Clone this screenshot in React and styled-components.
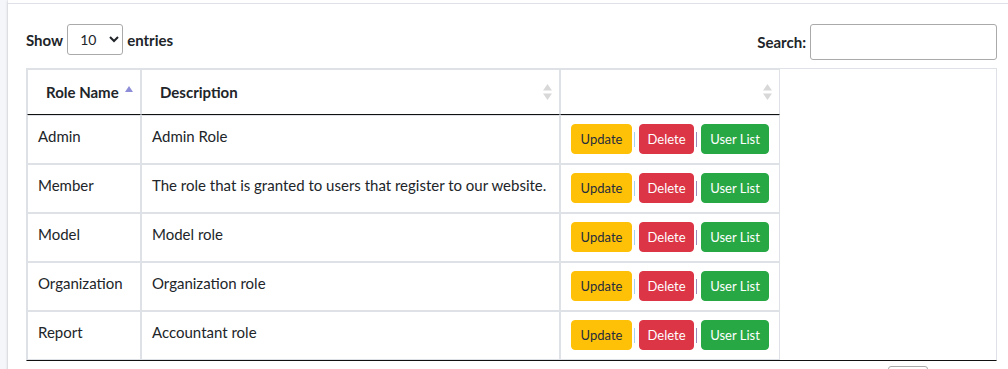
import React from "react";
import styled, { createGlobalStyle } from "styled-components";

const GlobalStyle = createGlobalStyle`
  body {
    margin: 0;
    background: #f4f6f9;
    font-family: Lato, "Noto Sans", sans-serif;
    color: #212529;
    overflow: hidden;
  }
`;

const Page = styled.div`
  padding-left: 8px;
`;

const Card = styled.div`
  background: #fff;
  box-shadow: 0 0 1px rgba(0, 0, 0, 0.125), 0 1px 3px rgba(0, 0, 0, 0.2);
  min-height: 420px;
`;

const CardTop = styled.div`
  height: 3px;
  border-bottom: 1px solid #dee2e6;
`;

const CardBody = styled.div`
  padding: 20px 11px 0 18px;
`;

const Controls = styled.div`
  display: flex;
  justify-content: space-between;
  align-items: flex-start;
  height: 36px;
  margin-bottom: 8px;
`;

const Label = styled.label`
  display: flex;
  align-items: center;
  gap: 3px;
  font-size: 15px;
  font-weight: 700;
  height: ${(p) => p.$h}px;
`;

const Select = styled.select`
  width: 56px;
  height: 31px;
  margin: 0 1px;
  padding: 0 4px 0 8px;
  border: 1px solid #aaa;
  border-radius: 3px;
  background: #fff;
  font-family: inherit;
  font-size: 14px;
  color: #212529;
`;

const SearchInput = styled.input`
  width: 187px;
  height: 36px;
  box-sizing: border-box;
  border: 1px solid #aaa;
  border-radius: 3px;
  margin-left: 1px;
  padding: 4px 8px;
  font-family: inherit;
`;

const Frame = styled.div`
  margin: 0;
  border: 1px solid #dee2e6;
  border-bottom: 1px solid #111;
`;

const Table = styled.table`
  border-collapse: separate;
  border-spacing: 0;
  table-layout: fixed;
  width: 753px;
`;

const Th = styled.th`
  position: relative;
  border: 1px solid #dee2e6;
  border-bottom: 1px solid #111;
  padding: 10px 30px 10px 18px;
  text-align: left;
  font-size: 15px;
  font-weight: 700;
  line-height: 24px;
  white-space: nowrap;
`;

const Td = styled.td`
  border: 1px solid #dee2e6;
  padding: 8px 9px 9px 10px;
  font-size: 15px;
  line-height: 24px;
  vertical-align: top;
  white-space: nowrap;
`;

const SortMark = styled.svg`
  position: absolute;
  right: 7px;
  top: 50%;
  transform: translateY(-50%);
`;

const Actions = styled.div`
  display: flex;
  align-items: center;
  height: 30px;
`;

const Button = styled.button`
  width: ${(p) => p.$w}px;
  height: 30px;
  border: 1px solid ${(p) => p.$bg};
  border-radius: 4px;
  background: ${(p) => p.$bg};
  color: ${(p) => p.$fg};
  font-family: inherit;
  font-size: 13px;
  padding: 0;
  cursor: pointer;
`;

const Divider = styled.span`
  width: 1px;
  height: 15px;
  margin: 0 4px 0 2px;
  background: ${(p) => p.$color};
`;

const Footer = styled.div`
  display: flex;
  justify-content: flex-end;
  padding: 5px 69px 0 0;
`;

const PageBox = styled.div`
  width: 40px;
  height: 30px;
  border: 1px solid #aaa;
  border-radius: 3px;
  box-sizing: border-box;
`;

const roles = [
  ["Admin", "Admin Role"],
  ["Member", "The role that is granted to users that register to our website."],
  ["Model", "Model role"],
  ["Organization", "Organization role"],
  ["Report", "Accountant role"],
];

function SortIcon({ dir }) {
  if (dir === "asc") {
    return (
      <SortMark width="8" height="6" viewBox="0 0 8 6" style={{ marginTop: "-3px" }}>
        <path d="M4 0 L8 6 L0 6 Z" fill="#8e8ed8" />
      </SortMark>
    );
  }
  return (
    <SortMark width="9" height="16" viewBox="0 0 9 16">
      <path d="M4.5 0 L9 6.5 L0 6.5 Z" fill="#d8d8d8" />
      <path d="M0 9.5 L9 9.5 L4.5 16 Z" fill="#d8d8d8" />
    </SortMark>
  );
}

export default function App() {
  return (
    <Page>
      <GlobalStyle />
      <Card>
        <CardTop />
        <CardBody>
          <Controls>
            <Label $h={31}>
              Show
              <Select defaultValue="10">
                <option value="10">10</option>
                <option value="25">25</option>
                <option value="50">50</option>
                <option value="100">100</option>
              </Select>
              entries
            </Label>
            <Label $h={36}>
              Search:
              <SearchInput type="search" />
            </Label>
          </Controls>
          <Frame>
            <Table>
              <colgroup>
                <col style={{ width: "114px" }} />
                <col style={{ width: "419px" }} />
                <col style={{ width: "220px" }} />
              </colgroup>
              <thead>
                <tr>
                  <Th>
                    Role Name
                    <SortIcon dir="asc" />
                  </Th>
                  <Th>
                    Description
                    <SortIcon />
                  </Th>
                  <Th>
                    <SortIcon />
                  </Th>
                </tr>
              </thead>
              <tbody>
                {roles.map(([name, desc]) => (
                  <tr key={name}>
                    <Td>{name}</Td>
                    <Td>{desc}</Td>
                    <Td>
                      <Actions>
                        <Button $w={61} $bg="#ffc107" $fg="#1f2d3d">Update</Button>
                        <Divider $color="#a6d2ee" />
                        <Button $w={55} $bg="#dc3545" $fg="#fff">Delete</Button>
                        <Divider $color="#9b87b8" />
                        <Button $w={68} $bg="#28a745" $fg="#fff">User List</Button>
                      </Actions>
                    </Td>
                  </tr>
                ))}
              </tbody>
            </Table>
          </Frame>
          <Footer>
            <PageBox />
          </Footer>
        </CardBody>
      </Card>
    </Page>
  );
}
